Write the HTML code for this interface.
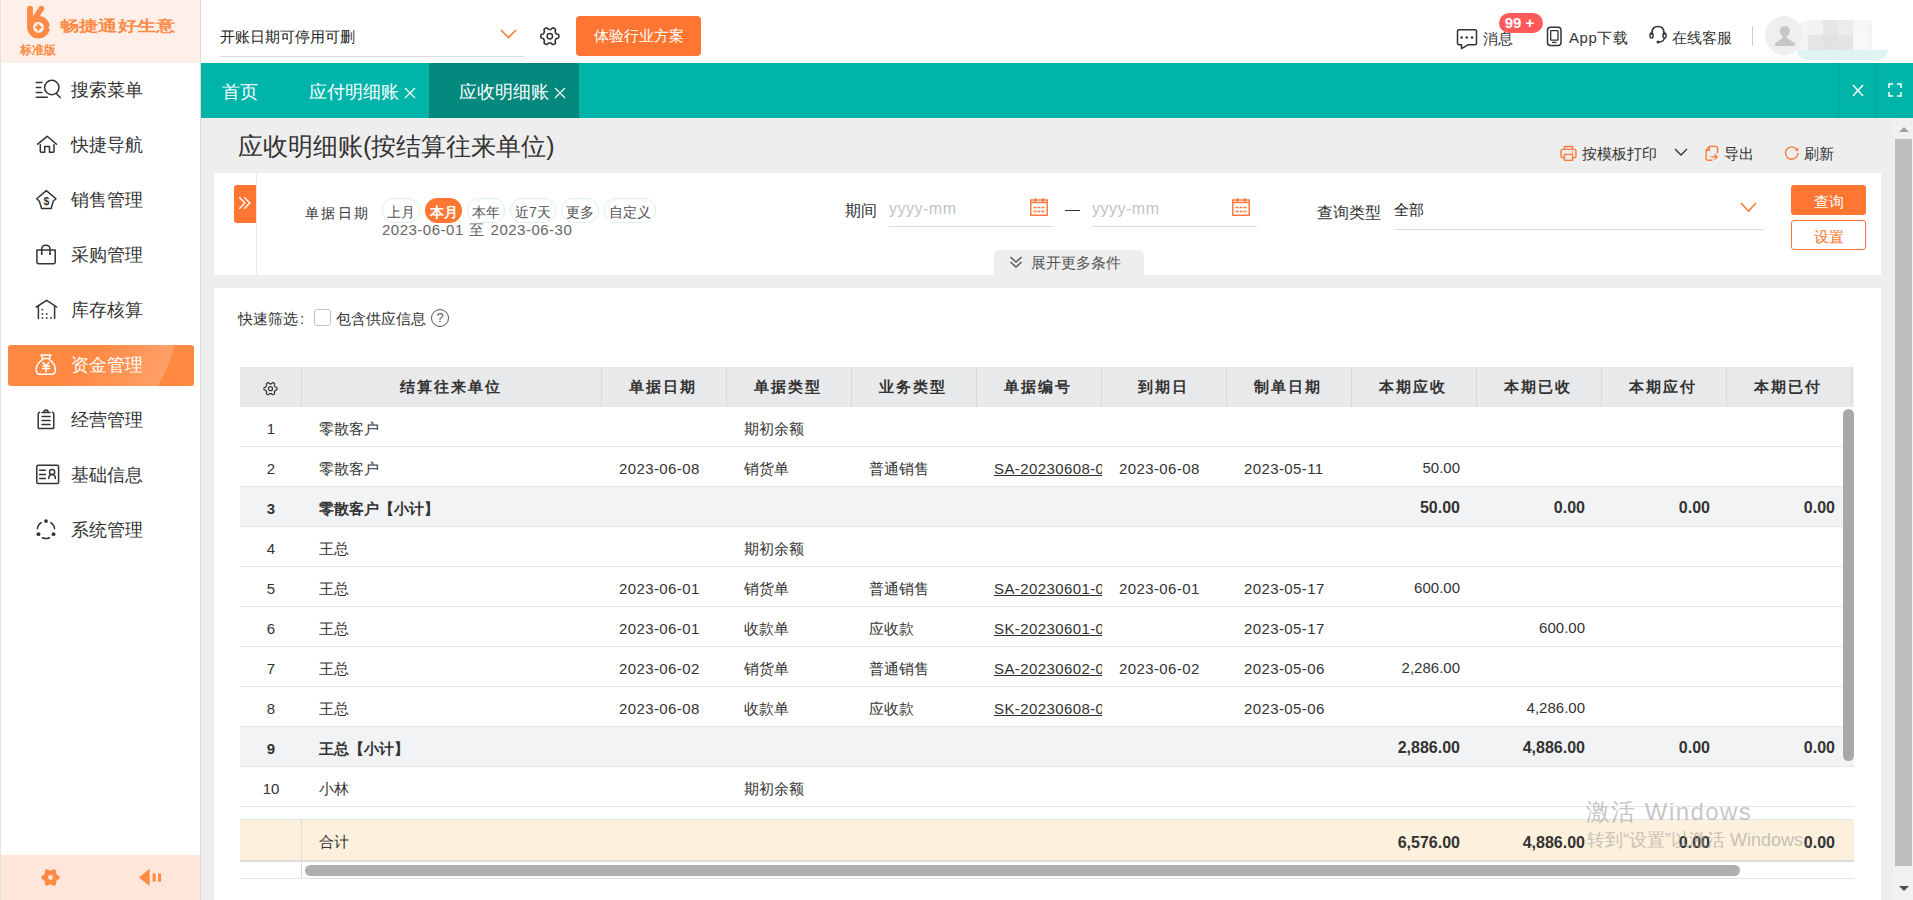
<!DOCTYPE html>
<html><head><meta charset="utf-8">
<style>
*{box-sizing:border-box;margin:0;padding:0}
body{width:1913px;height:900px;overflow:hidden;position:relative;background:#eeeeee;font-family:"Liberation Sans",sans-serif;color:#333}
.abs{position:absolute}
svg{position:absolute;overflow:visible}
#side{left:0;top:0;width:201px;height:900px;background:#fff;border-left:1px solid #e3e3e3;border-right:1px solid #dcdcdc}
#logo{left:1px;top:0;width:199px;height:63px;background:#fef0e9}
.mi{position:absolute;left:71px;font-size:18px;color:#333;line-height:20px;white-space:nowrap}
#act{left:8px;top:345px;width:186px;height:41px;border-radius:3px;background:linear-gradient(105deg,#ff8443 0%,#ff8a48 78%,#ffa36d 87%,#ff8a48 88%,#ff8a48 100%)}
#bot{left:1px;top:855px;width:199px;height:45px;background:#fee7da}
#hdr{left:201px;top:0;width:1712px;height:63px;background:#fff}
#tabs{left:201px;top:63px;width:1712px;height:55px;background:#00b4aa}
.tab{position:absolute;top:0;height:55px;line-height:55px;font-size:18px;color:#fff;white-space:nowrap}
.pill{position:absolute;top:198px;height:25px;padding:0;text-align:center;border:1px solid #dcf1ef;border-radius:12px;font-size:14px;line-height:26px;color:#555;white-space:nowrap}.pill.on{background:#fe7631;border-color:#fe7631;color:#fff;font-weight:bold}
.th{position:absolute;top:367px;height:40px;line-height:40px;padding-right:3px;text-align:center;font-size:15px;font-weight:bold;letter-spacing:2px;color:#333;white-space:nowrap}
.td{position:absolute;height:40px;line-height:40px;padding:0 17px;font-size:15px;color:#333;white-space:nowrap;overflow:hidden}.td.b{font-weight:bold}.td.r.b{font-size:16px}.td.c{text-align:center;padding:0}.td.r{text-align:right}.td.dt,.td.lnk{letter-spacing:0.4px}.lnk{text-overflow:clip}
.t15{font-size:15px;white-space:nowrap}
</style></head><body>
<div id="side" class="abs"></div>
<div id="logo" class="abs"></div>
<!-- logo icon -->
<svg style="left:20px;top:2px" width="36" height="40" viewBox="0 0 36 40"><path d="M10 6.7 V25" stroke="#ff8a45" stroke-width="5.8" stroke-linecap="round"/><path d="M21.4 6.6 L14.5 17" stroke="#ff8a45" stroke-width="5.6" stroke-linecap="round"/><circle cx="18.5" cy="25.3" r="8.4" stroke="#ff8a45" stroke-width="5.8" fill="none"/><path d="M31.5 23.6 L27.6 25.6 L31.5 27.6 Z" fill="#fef0e9"/><path d="M18.5 21.0 Q19.4 24.400000000000002 22.8 25.3 Q19.4 26.2 18.5 29.6 Q17.6 26.2 14.2 25.3 Q17.6 24.400000000000002 18.5 21.0 Z" fill="#ff8a45"/></svg>
<div class="abs" style="left:60px;top:17px;font-size:15px;font-weight:bold;color:#ff8a45;transform:scaleX(1.28);transform-origin:0 0">畅捷通好生意</div>
<div class="abs" style="left:20px;top:42px;font-size:12px;font-weight:bold;color:#ff8a45">标准版</div>

<svg style="left:8px;top:345px" width="186" height="41" viewBox="0 0 186 41"><defs><clipPath id="ac"><rect width="186" height="41" rx="3"/></clipPath><radialGradient id="ag" gradientUnits="userSpaceOnUse" cx="-3" cy="-45" r="176"><stop offset="0.55" stop-color="#fff" stop-opacity="0"/><stop offset="0.995" stop-color="#fff" stop-opacity="0.2"/><stop offset="1" stop-color="#fff" stop-opacity="0"/></radialGradient></defs><g clip-path="url(#ac)"><rect width="186" height="41" fill="#ff8842"/><circle cx="-3" cy="-45" r="176" fill="url(#ag)"/></g></svg>
<div class="mi" style="top:80px">搜索菜单</div>
<div class="mi" style="top:135px">快捷导航</div>
<div class="mi" style="top:190px">销售管理</div>
<div class="mi" style="top:245px">采购管理</div>
<div class="mi" style="top:300px">库存核算</div>
<div class="mi" style="top:355px;color:#fff">资金管理</div>
<div class="mi" style="top:410px">经营管理</div>
<div class="mi" style="top:465px">基础信息</div>
<div class="mi" style="top:520px">系统管理</div>

<div id="bot" class="abs"></div>

<svg style="left:30px;top:75px" width="40" height="30" viewBox="0 0 40 30"><path d="M6.3 7.5 H12 M6.3 12.5 H10.8 M6.3 17.5 H11.8 M6.3 22.2 H17.3 M26.3 18.6 L30.2 22.6" stroke="#333" stroke-width="1.5" fill="none" stroke-linecap="round" stroke-linejoin="round"/><circle cx="21.8" cy="12.5" r="7.2" stroke="#333" stroke-width="1.5" fill="none" stroke-linecap="round" stroke-linejoin="round"/></svg>
<svg style="left:30px;top:130px" width="40" height="30" viewBox="0 0 40 30"><path d="M7.6 14.2 L17.2 6.3 L26.6 14.2 M10.3 14.6 V21.6 Q10.3 22.3 11 22.3 H14.7 V16.4 H19.5 V22.3 H23.3 Q24 22.3 24 21.6 V14.6" stroke="#333" stroke-width="1.5" fill="none" stroke-linecap="round" stroke-linejoin="round"/></svg>
<svg style="left:30px;top:185px" width="40" height="30" viewBox="0 0 40 30"><path d="M16.3 5.6 L6.7 13.8 L9.4 16.2 L11.6 23.6 H21.1 L23.2 16.2 L26 13.8 Z" stroke="#333" stroke-width="1.5" fill="none" stroke-linecap="round" stroke-linejoin="round"/><text x="16.4" y="20.2" font-size="10.5" font-weight="bold" text-anchor="middle" fill="#333" font-family="Liberation Sans">$</text></svg>
<svg style="left:30px;top:240px" width="40" height="30" viewBox="0 0 40 30"><path d="M6.9 9.9 H25.2 V22.3 Q25.2 23.7 23.8 23.7 H8.3 Q6.9 23.7 6.9 22.3 Z M11.7 13.7 V9.2 Q11.7 5.2 15.9 5.2 Q20 5.2 20 9.2 V13.7" stroke="#333" stroke-width="1.5" fill="none" stroke-linecap="round" stroke-linejoin="round"/><circle cx="11.7" cy="14" r="1" fill="#333"/><circle cx="20" cy="14" r="1" fill="#333"/></svg>
<svg style="left:30px;top:295px" width="40" height="30" viewBox="0 0 40 30"><path d="M6.3 12 L16.7 5.3 L26.7 12 M8.4 11.2 V23.4 M24.6 11.2 V23.4" stroke="#333" stroke-width="1.5" fill="none" stroke-linecap="round" stroke-linejoin="round"/><rect x="11.6" y="13.9" width="1.6" height="1.6" fill="#333"/><rect x="11.6" y="18.2" width="1.6" height="1.6" fill="#333"/><rect x="15.9" y="18.2" width="1.6" height="1.6" fill="#333"/><rect x="11.6" y="22.2" width="1.6" height="1.6" fill="#333"/><rect x="15.9" y="22.2" width="1.6" height="1.6" fill="#333"/><rect x="20.2" y="22.2" width="1.6" height="1.6" fill="#333"/></svg>
<svg style="left:30px;top:350px" width="40" height="30" viewBox="0 0 40 30"><path d="M11.2 5 H20.8 L19.4 8.6 H12.6 Z M12.6 9.4 Q6.2 13.8 6.2 19.8 Q6.2 24.3 10 24.3 H21.5 Q25.3 24.3 25.3 19.8 Q25.3 13.8 19.4 9.4 M13 12.6 L16 16 L19 12.6 M16 16 V21.6 M12.6 16 H19.6 M12.6 18.6 H19.6" stroke="#fff" stroke-width="1.5" fill="none" stroke-linecap="round" stroke-linejoin="round"/></svg>
<svg style="left:30px;top:405px" width="40" height="30" viewBox="0 0 40 30"><path d="M9.6 7.2 Q8.2 7.6 8.2 9.2 V22.4 Q8.2 23.5 9.2 23.5 H22.8 Q23.8 23.5 23.8 22.4 V9.2 Q23.8 7.6 22.4 7.2 M12 7.6 H20 M13.9 7.4 Q13.9 5.1 16 5.1 Q18.1 5.1 18.1 7.4 M12 11.6 H20 M12 15.6 H20 M12 19.6 H20" stroke="#333" stroke-width="1.5" fill="none" stroke-linecap="round" stroke-linejoin="round"/></svg>
<svg style="left:30px;top:460px" width="40" height="30" viewBox="0 0 40 30"><rect x="6.8" y="5.2" width="21.8" height="18.3" rx="1.3" stroke="#333" stroke-width="1.5" fill="none" stroke-linecap="round" stroke-linejoin="round"/><path d="M9.6 10.2 H15.4 M9.6 14.4 H15.4 M9.6 18.6 H15.4 M18.8 18.6 Q18.8 14.6 22.1 14.6 Q25.4 14.6 25.4 18.6" stroke="#333" stroke-width="1.5" fill="none" stroke-linecap="round" stroke-linejoin="round"/><circle cx="22.1" cy="12" r="2.6" stroke="#333" stroke-width="1.5" fill="none" stroke-linecap="round" stroke-linejoin="round"/></svg>
<svg style="left:30px;top:515px" width="40" height="30" viewBox="0 0 40 30"><path d="M7.38 13.59 A8.7 8.7 0 0 1 11.14 7.59 M20.86 7.59 A8.7 8.7 0 0 1 24.62 13.59 M19.54 22.75 A8.7 8.7 0 0 1 12.46 22.75" stroke="#333" stroke-width="1.5" fill="none" stroke-linecap="round" stroke-linejoin="round"/><circle cx="16.0" cy="6.1" r="1.9" fill="#333"/><circle cx="8.47" cy="19.15" r="1.9" fill="#333"/><circle cx="23.53" cy="19.15" r="1.9" fill="#333"/></svg>
<!-- bottom bar icons -->
<svg style="left:40px;top:868px" width="21" height="19" viewBox="0 0 21 19"><circle cx="10.5" cy="9.5" r="7.2" fill="#ff8a45"/><circle cx="17.40" cy="9.50" r="2.3" fill="#ff8a45"/><circle cx="13.95" cy="15.48" r="2.3" fill="#ff8a45"/><circle cx="7.05" cy="15.48" r="2.3" fill="#ff8a45"/><circle cx="3.60" cy="9.50" r="2.3" fill="#ff8a45"/><circle cx="7.05" cy="3.52" r="2.3" fill="#ff8a45"/><circle cx="13.95" cy="3.52" r="2.3" fill="#ff8a45"/><circle cx="10.5" cy="9.5" r="2.4" fill="#fee7da"/></svg>
<svg style="left:138px;top:868px" width="24" height="19" viewBox="0 0 24 19"><path d="M0.9 9.4 L11.6 0.8 V18.1 Z" fill="#ff8a45"/><rect x="14.6" y="5.5" width="3.1" height="8.2" fill="#ff8a45"/><rect x="20" y="5.5" width="3.1" height="8.2" fill="#ff8a45"/></svg>
<div id="hdr" class="abs"></div>
<div id="tabs" class="abs"></div>
<div class="abs" style="left:429px;top:63px;width:150px;height:55px;background:#03887e"></div>
<div class="tab" style="left:222px;top:64.5px">首页</div>
<div class="tab" style="left:309px;top:64.5px">应付明细账</div>
<div class="tab" style="left:459px;top:64.5px">应收明细账</div>

<!-- header -->
<div class="abs t15" style="left:220px;top:27.5px;color:#222">开账日期可停用可删</div>
<div class="abs" style="left:220px;top:56px;width:304px;height:1px;background:#dcdcdc"></div>
<svg style="left:500px;top:29px" width="17" height="10"><path d="M1 1 L8.5 8.5 L16 1" stroke="#ff7a3d" stroke-width="1.6" fill="none"/></svg>
<svg style="left:535px;top:22px" width="30" height="28" viewBox="0 0 30 28"><path d="M23.85 14.20 L23.83 14.67 L23.76 15.14 L23.60 15.59 L23.21 15.99 L22.43 16.24 L21.65 16.43 L21.23 16.67 L21.00 16.96 L20.82 17.27 L20.65 17.57 L20.47 17.88 L20.29 18.19 L20.15 18.53 L20.15 19.02 L20.39 19.79 L20.55 20.59 L20.41 21.13 L20.10 21.49 L19.73 21.78 L19.33 22.04 L18.91 22.26 L18.47 22.43 L17.99 22.52 L17.46 22.38 L16.84 21.83 L16.30 21.25 L15.88 21.00 L15.51 20.95 L15.15 20.95 L14.80 20.95 L14.45 20.95 L14.09 20.95 L13.72 21.00 L13.30 21.25 L12.76 21.83 L12.14 22.38 L11.61 22.52 L11.13 22.43 L10.69 22.26 L10.28 22.04 L9.87 21.78 L9.50 21.49 L9.19 21.13 L9.05 20.59 L9.21 19.79 L9.45 19.02 L9.45 18.53 L9.31 18.19 L9.13 17.88 L8.95 17.57 L8.78 17.27 L8.60 16.96 L8.37 16.67 L7.95 16.43 L7.17 16.24 L6.39 15.99 L6.00 15.59 L5.84 15.14 L5.77 14.67 L5.75 14.20 L5.77 13.73 L5.84 13.26 L6.00 12.81 L6.39 12.41 L7.17 12.16 L7.95 11.97 L8.37 11.73 L8.60 11.44 L8.78 11.13 L8.95 10.83 L9.13 10.52 L9.31 10.21 L9.45 9.87 L9.45 9.38 L9.21 8.61 L9.05 7.81 L9.19 7.27 L9.50 6.91 L9.87 6.62 L10.27 6.36 L10.69 6.14 L11.13 5.97 L11.61 5.88 L12.14 6.02 L12.76 6.57 L13.30 7.15 L13.72 7.40 L14.09 7.45 L14.45 7.45 L14.80 7.45 L15.15 7.45 L15.51 7.45 L15.88 7.40 L16.30 7.15 L16.84 6.57 L17.46 6.02 L17.99 5.88 L18.47 5.97 L18.91 6.14 L19.33 6.36 L19.73 6.62 L20.10 6.91 L20.41 7.27 L20.55 7.81 L20.39 8.61 L20.15 9.38 L20.15 9.87 L20.29 10.21 L20.47 10.52 L20.65 10.83 L20.82 11.13 L21.00 11.44 L21.23 11.73 L21.65 11.97 L22.43 12.16 L23.21 12.41 L23.60 12.81 L23.76 13.26 L23.83 13.73 Z" stroke="#333" stroke-width="1.6" fill="none" stroke-linejoin="round"/><circle cx="14.8" cy="14.2" r="2.7" stroke="#333" stroke-width="1.5" fill="none"/></svg>
<div class="abs" style="left:576px;top:16px;width:125px;height:40px;border-radius:4px;background:#fe7631;color:#fff;font-size:15px;line-height:40px;text-align:center">体验行业方案</div>

<svg style="left:1450px;top:20px" width="30" height="32" viewBox="0 0 30 32"><path d="M18 24.8 H25 Q26.5 24.8 26.5 23.3 V11.3 Q26.5 9.8 25 9.8 H9 Q7.5 9.8 7.5 11.3 V23.3 Q7.5 24.8 9 24.8 H11.5 V28.6 Z" stroke="#333" stroke-width="1.5" fill="none" stroke-linejoin="round"/><circle cx="11.6" cy="17.4" r="1.25" fill="#333"/><circle cx="16.8" cy="17.4" r="1.25" fill="#333"/><circle cx="22" cy="17.4" r="1.25" fill="#333"/></svg>
<div class="abs t15" style="left:1483px;top:30px;color:#333">消息</div>
<div class="abs" style="left:1499px;top:13px;width:44px;height:20px;border-radius:10px;background:#fe5a5a;color:#fff;font-size:15px;font-weight:bold;line-height:20px;text-align:center;white-space:nowrap;padding-right:3px">99 +</div>
<svg style="left:1540px;top:20px" width="30" height="32" viewBox="0 0 30 32"><rect x="7.5" y="7.2" width="13.5" height="18.2" rx="3" stroke="#333" stroke-width="1.5" fill="none"/><rect x="10.7" y="10.6" width="7.3" height="9.6" rx="0.5" stroke="#333" stroke-width="1.3" fill="none"/><path d="M12.6 22.4 H15.9" stroke="#333" stroke-width="1.4" stroke-linecap="round"/></svg>
<div class="abs t15" style="left:1569px;top:29px;color:#333;letter-spacing:0.6px">App下载</div>
<svg style="left:1649px;top:25px" width="18" height="19" viewBox="0 0 18 19"><path d="M3 10 V8 Q3 1.5 9 1.5 Q15 1.5 15 8 V10" stroke="#333" stroke-width="1.6" fill="none"/><rect x="1" y="8" width="3" height="5" rx="1.5" stroke="#333" stroke-width="1.5" fill="none"/><rect x="14" y="8" width="3" height="5" rx="1.5" stroke="#333" stroke-width="1.5" fill="none"/><path d="M15.5 13 Q15 16.5 10 17" stroke="#333" stroke-width="1.5" fill="none"/><circle cx="9" cy="17" r="1.5" fill="#333"/></svg>
<div class="abs t15" style="left:1672px;top:28.5px;color:#333">在线客服</div>
<div class="abs" style="left:1752px;top:26px;width:1px;height:20px;background:#ccc"></div>
<div class="abs" style="left:1797px;top:50px;width:91px;height:10px;border-radius:0 0 14px 14px;background:#dff3f2"></div>
<div class="abs" style="left:1796px;top:20px;width:76px;height:30px;background:#f4f4f4;border-radius:12px 0 0 0"></div>
<div class="abs" style="left:1808px;top:20px;width:15px;height:15px;background:#f2f2f2"></div>
<div class="abs" style="left:1823px;top:20px;width:15px;height:15px;background:#e6e6e6"></div>
<div class="abs" style="left:1838px;top:20px;width:15px;height:15px;background:#ececee"></div>
<div class="abs" style="left:1853px;top:20px;width:15px;height:15px;background:#f7f7f8"></div>
<div class="abs" style="left:1808px;top:35px;width:15px;height:15px;background:#e5e5e5"></div>
<div class="abs" style="left:1823px;top:35px;width:15px;height:15px;background:#e2e2e2"></div>
<div class="abs" style="left:1838px;top:35px;width:15px;height:15px;background:#e4e4e4"></div>
<div class="abs" style="left:1853px;top:35px;width:15px;height:15px;background:#f8f8f9"></div>
<div class="abs" style="left:1765px;top:16px;width:38px;height:39px;border-radius:50%;background:#efefef"></div>
<svg style="left:1760px;top:10px" width="40" height="45" viewBox="0 0 40 45"><circle cx="24.9" cy="21.2" r="5.1" fill="#c6c6c6"/><path d="M22.6 25 H27.2 V28.3 L35 33.3 V35.9 H15 V33.3 L22.6 28.3 Z" fill="#c6c6c6"/></svg>

<!-- tab close icons -->
<svg style="left:404px;top:87px" width="12" height="12"><path d="M1 1 L11 11 M11 1 L1 11" stroke="#fff" stroke-width="1.2"/></svg>
<svg style="left:554px;top:87px" width="12" height="12"><path d="M1 1 L11 11 M11 1 L1 11" stroke="#fff" stroke-width="1.2"/></svg>
<div class="abs" style="left:1836px;top:63px;width:4px;height:55px;background:linear-gradient(90deg,rgba(0,0,0,0),rgba(0,0,0,0.05))"></div>
<div class="abs" style="left:1874px;top:63px;width:4px;height:55px;background:linear-gradient(90deg,rgba(0,0,0,0),rgba(0,0,0,0.05))"></div>
<svg style="left:1852px;top:84px" width="12" height="13"><path d="M1 1 L11 12 M11 1 L1 12" stroke="#fff" stroke-width="1.4"/></svg>
<svg style="left:1888px;top:83px" width="14" height="14"><path d="M1 5 V1 H5 M9 1 H13 V5 M13 9 V13 H9 M5 13 H1 V9" stroke="#fff" stroke-width="1.5" fill="none"/></svg>

<!-- content -->
<div class="abs" style="left:238px;top:130px;font-size:25px;color:#333;white-space:nowrap">应收明细账(按结算往来单位)</div>
<svg style="left:1555px;top:140px" width="30" height="25" viewBox="0 0 30 25"><path d="M9.4 9.3 V6.5 H17.5 V9.3" stroke="#ff7a3d" stroke-width="1.4" fill="none"/><path d="M9.2 17.8 H8 Q6 17.8 6 15.8 V11.4 Q6 9.4 8 9.4 H19 Q21 9.4 21 11.4 V15.8 Q21 17.8 19 17.8 H17.8" stroke="#ff7a3d" stroke-width="1.4" fill="none"/><rect x="9.4" y="14.4" width="8.1" height="5.9" stroke="#ff7a3d" stroke-width="1.4" fill="none"/><circle cx="17.6" cy="12.1" r="0.8" fill="#ff7a3d"/></svg>
<div class="abs t15" style="left:1582px;top:144.5px">按模板打印</div>
<svg style="left:1674px;top:148px" width="14" height="9"><path d="M1 1 L7 7 L13 1" stroke="#333" stroke-width="1.4" fill="none"/></svg>
<svg style="left:1700px;top:140px" width="30" height="25" viewBox="0 0 30 25"><path d="M9.4 6.4 H15.6 Q17.5 6.4 17.5 8.3 V13.6 M12.5 20.3 H8 Q6.1 20.3 6.1 18.4 V10.3 L9.4 6.4 V10.3 H6.1" stroke="#ff7a3d" stroke-width="1.4" fill="none" stroke-linejoin="round"/><path d="M10.8 16.9 H17 M14.5 14.3 L17.1 16.9 L14.5 19.5" stroke="#ff7a3d" stroke-width="1.4" fill="none"/></svg>
<div class="abs t15" style="left:1724px;top:144.5px">导出</div>
<svg style="left:1778px;top:140px" width="30" height="25" viewBox="0 0 30 25"><path d="M19.85 13 A6.2 6.2 0 1 1 18.5 9.2" stroke="#ff7a3d" stroke-width="1.4" fill="none"/><path d="M16.6 10.6 L20.2 11.3 L20.2 7.6 Z" fill="#ff7a3d"/></svg>
<div class="abs t15" style="left:1804px;top:144.5px">刷新</div>

<div class="abs" style="left:214px;top:173px;width:1667px;height:102px;background:#fff"></div>
<div class="abs" style="left:256px;top:173px;width:1px;height:102px;background:#e8e8e8"></div>
<div class="abs" style="left:234px;top:185px;width:22px;height:38px;background:#fe7631;border-radius:3px 0 0 3px"></div>
<svg style="left:238px;top:196px" width="15" height="15"><path d="M1.3 1.3 L6.8 7 L1.3 12.8 M6.3 1.3 L11.8 7 L6.3 12.8" stroke="#fff" stroke-width="1.4" fill="none"/></svg>
<div class="abs" style="left:305px;top:204.5px;font-size:14px;letter-spacing:2.3px;white-space:nowrap">单据日期</div>
<div class="pill" style="left:382px;width:38px">上月</div>
<div class="pill on" style="left:425px;width:37px">本月</div>
<div class="pill" style="left:467px;width:38px">本年</div>
<div class="pill" style="left:510px;width:46px">近7天</div>
<div class="pill" style="left:561px;width:38px">更多</div>
<div class="pill" style="left:604px;width:52px">自定义</div>
<div class="abs" style="left:382px;top:221px;font-size:15px;color:#666;white-space:nowrap;letter-spacing:0.5px;word-spacing:1px">2023-06-01 至 2023-06-30</div>

<div class="abs" style="left:845px;top:201px;font-size:16px;white-space:nowrap">期间</div>
<div class="abs" style="left:889px;top:199.5px;font-size:16px;letter-spacing:0.5px;color:#c0c4cc;white-space:nowrap">yyyy-mm</div>
<div class="abs" style="left:889px;top:226px;width:165px;height:1px;background:#dcdcdc"></div>
<svg class="cal" style="left:1030px;top:198px" width="18" height="18" viewBox="0 0 18 18"><path d="M0.8 2 H17.2 V17.2 H0.8 Z M0.8 4.6 H17.2" stroke="#ff7a3d" stroke-width="1.5" fill="none"/><path d="M5.5 0 V5 M13 0 V5" stroke="#ff7a3d" stroke-width="1.5"/><path d="M3.5 9.6 H14.5 M3.5 13.4 H14.5" stroke="#ff7a3d" stroke-width="1.5" stroke-dasharray="3 1"/></svg>
<div class="abs" style="left:1065px;top:210px;width:15px;height:1px;background:#333"></div>
<div class="abs" style="left:1092px;top:199.5px;font-size:16px;letter-spacing:0.5px;color:#c0c4cc;white-space:nowrap">yyyy-mm</div>
<div class="abs" style="left:1092px;top:226px;width:165px;height:1px;background:#dcdcdc"></div>
<svg style="left:1232px;top:198px" width="18" height="18" viewBox="0 0 18 18"><path d="M0.8 2 H17.2 V17.2 H0.8 Z M0.8 4.6 H17.2" stroke="#ff7a3d" stroke-width="1.5" fill="none"/><path d="M5.5 0 V5 M13 0 V5" stroke="#ff7a3d" stroke-width="1.5"/><path d="M3.5 9.6 H14.5 M3.5 13.4 H14.5" stroke="#ff7a3d" stroke-width="1.5" stroke-dasharray="3 1"/></svg>
<div class="abs" style="left:994px;top:250px;width:150px;height:25px;background:#eeeeee;border-radius:6px 6px 0 0"></div>
<svg style="left:1009px;top:255px" width="14" height="14"><path d="M1.5 2 L7 7 L12.5 2 M1.5 7 L7 12 L12.5 7" stroke="#555" stroke-width="1.4" fill="none"/></svg>
<div class="abs" style="left:1031px;top:254px;font-size:15px;color:#555;white-space:nowrap">展开更多条件</div>

<div class="abs" style="left:1317px;top:203px;font-size:16px;white-space:nowrap">查询类型</div>
<div class="abs" style="left:1394px;top:201px;font-size:15px;color:#222;white-space:nowrap">全部</div>
<div class="abs" style="left:1394px;top:229px;width:369px;height:1px;background:#dcdcdc"></div>
<svg style="left:1740px;top:202px" width="17" height="11"><path d="M1 1 L8.5 9 L16 1" stroke="#ff7a3d" stroke-width="1.6" fill="none"/></svg>
<div class="abs" style="left:1791px;top:185px;width:75px;height:30px;background:#fe7631;border-radius:3px;color:#fff;font-size:15px;line-height:33px;text-align:center">查询</div>
<div class="abs" style="left:1791px;top:220px;width:75px;height:30px;border:1px solid #fe7631;border-radius:3px;color:#fe7631;font-size:15px;line-height:31px;text-align:center">设置</div>

<div class="abs" style="left:214px;top:288px;width:1667px;height:612px;background:#fff"></div>
<div class="abs" style="left:238px;top:310px;font-size:15px;white-space:nowrap">快速筛选<span style="margin-left:2px">:</span></div>
<div class="abs" style="left:314px;top:309px;width:17px;height:17px;border:1px solid #c4c4c4;border-radius:3px;background:#fff"></div>
<div class="abs" style="left:336px;top:310px;font-size:15px;white-space:nowrap">包含供应信息</div>
<div class="abs" style="left:431px;top:309px;width:18px;height:18px;border:1.5px solid #555;border-radius:50%;font-size:13px;line-height:15px;text-align:center;color:#555">?</div>

<!-- scrollbar -->
<div class="abs" style="left:1893px;top:118px;width:20px;height:782px;background:#f1f1f1"></div>
<div class="abs" style="left:1895px;top:139px;width:17px;height:727px;background:#bebebe"></div>
<svg style="left:1898px;top:126px" width="12" height="7"><path d="M1 6 L6 1 L11 6Z" fill="#a3a3a3"/></svg>
<svg style="left:1898px;top:885px" width="12" height="7"><path d="M1 1 L6 6 L11 1Z" fill="#505050"/></svg>
<!--TABLE-->
<div class="abs" style="left:240px;top:367px;width:1614px;height:40px;background:#e8e9eb"></div>
<div class="abs" style="left:301px;top:367px;width:1px;height:40px;background:#d8d9db"></div>
<div class="abs" style="left:601px;top:367px;width:1px;height:40px;background:#d8d9db"></div>
<div class="abs" style="left:726px;top:367px;width:1px;height:40px;background:#d8d9db"></div>
<div class="abs" style="left:851px;top:367px;width:1px;height:40px;background:#d8d9db"></div>
<div class="abs" style="left:976px;top:367px;width:1px;height:40px;background:#d8d9db"></div>
<div class="abs" style="left:1101px;top:367px;width:1px;height:40px;background:#d8d9db"></div>
<div class="abs" style="left:1226px;top:367px;width:1px;height:40px;background:#d8d9db"></div>
<div class="abs" style="left:1351px;top:367px;width:1px;height:40px;background:#d8d9db"></div>
<div class="abs" style="left:1476px;top:367px;width:1px;height:40px;background:#d8d9db"></div>
<div class="abs" style="left:1601px;top:367px;width:1px;height:40px;background:#d8d9db"></div>
<div class="abs" style="left:1726px;top:367px;width:1px;height:40px;background:#d8d9db"></div>
<div class="abs" style="left:1851px;top:367px;width:1px;height:40px;background:#d8d9db"></div>
<div class="th" style="left:302px;width:300px">结算往来单位</div>
<div class="th" style="left:602px;width:125px">单据日期</div>
<div class="th" style="left:727px;width:125px">单据类型</div>
<div class="th" style="left:852px;width:125px">业务类型</div>
<div class="th" style="left:977px;width:125px">单据编号</div>
<div class="th" style="left:1102px;width:125px">到期日</div>
<div class="th" style="left:1227px;width:125px">制单日期</div>
<div class="th" style="left:1352px;width:125px">本期应收</div>
<div class="th" style="left:1477px;width:125px">本期已收</div>
<div class="th" style="left:1602px;width:125px">本期应付</div>
<div class="th" style="left:1727px;width:125px">本期已付</div>
<svg style="left:260px;top:378px" width="22" height="22" viewBox="0 0 22 22"><path d="M17.05 10.70 L17.04 11.04 L16.99 11.38 L16.87 11.71 L16.58 11.99 L16.01 12.18 L15.43 12.30 L15.12 12.47 L14.96 12.68 L14.83 12.90 L14.70 13.12 L14.57 13.34 L14.45 13.57 L14.35 13.82 L14.35 14.17 L14.53 14.73 L14.66 15.32 L14.56 15.71 L14.33 15.98 L14.06 16.19 L13.78 16.37 L13.47 16.53 L13.15 16.66 L12.81 16.72 L12.42 16.61 L11.98 16.21 L11.58 15.77 L11.27 15.59 L11.01 15.55 L10.75 15.55 L10.50 15.55 L10.25 15.55 L9.99 15.55 L9.73 15.59 L9.42 15.77 L9.02 16.21 L8.58 16.61 L8.19 16.72 L7.85 16.66 L7.53 16.53 L7.23 16.37 L6.94 16.19 L6.67 15.98 L6.44 15.71 L6.34 15.32 L6.47 14.73 L6.65 14.17 L6.65 13.82 L6.55 13.57 L6.43 13.34 L6.30 13.12 L6.17 12.90 L6.04 12.68 L5.88 12.47 L5.57 12.30 L4.99 12.18 L4.42 11.99 L4.13 11.71 L4.01 11.38 L3.96 11.04 L3.95 10.70 L3.96 10.36 L4.01 10.02 L4.13 9.69 L4.42 9.41 L4.99 9.22 L5.57 9.10 L5.88 8.93 L6.04 8.72 L6.17 8.50 L6.30 8.28 L6.43 8.06 L6.55 7.83 L6.65 7.58 L6.65 7.23 L6.47 6.67 L6.34 6.08 L6.44 5.69 L6.67 5.42 L6.94 5.21 L7.22 5.03 L7.53 4.87 L7.85 4.74 L8.19 4.68 L8.58 4.79 L9.02 5.19 L9.42 5.63 L9.73 5.81 L9.99 5.85 L10.25 5.85 L10.50 5.85 L10.75 5.85 L11.01 5.85 L11.27 5.81 L11.58 5.63 L11.98 5.19 L12.42 4.79 L12.81 4.68 L13.15 4.74 L13.47 4.87 L13.78 5.03 L14.06 5.21 L14.33 5.42 L14.56 5.69 L14.66 6.08 L14.53 6.67 L14.35 7.23 L14.35 7.58 L14.45 7.83 L14.57 8.06 L14.70 8.28 L14.83 8.50 L14.96 8.72 L15.12 8.93 L15.43 9.10 L16.01 9.22 L16.58 9.41 L16.87 9.69 L16.99 10.02 L17.04 10.36 Z" stroke="#333" stroke-width="1.2" fill="none" stroke-linejoin="round"/><circle cx="10.5" cy="10.7" r="2" stroke="#333" stroke-width="1.2" fill="none"/></svg>
<div class="abs" style="left:240px;top:446px;width:1614px;height:1px;background:#e4e5e7"></div>
<div class="td c" style="left:240px;top:408.5px;width:62px">1</div>
<div class="td" style="left:302px;top:409px;width:300px">零散客户</div>
<div class="td" style="left:727px;top:409px;width:125px">期初余额</div>
<div class="abs" style="left:240px;top:486px;width:1614px;height:1px;background:#e4e5e7"></div>
<div class="td c" style="left:240px;top:448.5px;width:62px">2</div>
<div class="td" style="left:302px;top:449px;width:300px">零散客户</div>
<div class="td dt" style="left:602px;top:448.5px;width:125px">2023-06-08</div>
<div class="td" style="left:727px;top:449px;width:125px">销货单</div>
<div class="td" style="left:852px;top:449px;width:125px">普通销售</div>
<div class="td lnk" style="left:977px;top:448.5px;width:125px"><u>SA-20230608-0</u></div>
<div class="td dt" style="left:1102px;top:448.5px;width:125px">2023-06-08</div>
<div class="td dt" style="left:1227px;top:448.5px;width:125px">2023-05-11</div>
<div class="td r" style="left:1352px;top:447.5px;width:125px">50.00</div>
<div class="abs" style="left:240px;top:487px;width:1614px;height:39px;background:#f2f3f5"></div>
<div class="abs" style="left:240px;top:526px;width:1614px;height:1px;background:#e4e5e7"></div>
<div class="td c b" style="left:240px;top:488.5px;width:62px">3</div>
<div class="td b" style="left:302px;top:489px;width:300px">零散客户【小计】</div>
<div class="td r b" style="left:1352px;top:487.5px;width:125px">50.00</div>
<div class="td r b" style="left:1477px;top:487.5px;width:125px">0.00</div>
<div class="td r b" style="left:1602px;top:487.5px;width:125px">0.00</div>
<div class="td r b" style="left:1727px;top:487.5px;width:125px">0.00</div>
<div class="abs" style="left:240px;top:566px;width:1614px;height:1px;background:#e4e5e7"></div>
<div class="td c" style="left:240px;top:528.5px;width:62px">4</div>
<div class="td" style="left:302px;top:529px;width:300px">王总</div>
<div class="td" style="left:727px;top:529px;width:125px">期初余额</div>
<div class="abs" style="left:240px;top:606px;width:1614px;height:1px;background:#e4e5e7"></div>
<div class="td c" style="left:240px;top:568.5px;width:62px">5</div>
<div class="td" style="left:302px;top:569px;width:300px">王总</div>
<div class="td dt" style="left:602px;top:568.5px;width:125px">2023-06-01</div>
<div class="td" style="left:727px;top:569px;width:125px">销货单</div>
<div class="td" style="left:852px;top:569px;width:125px">普通销售</div>
<div class="td lnk" style="left:977px;top:568.5px;width:125px"><u>SA-20230601-0</u></div>
<div class="td dt" style="left:1102px;top:568.5px;width:125px">2023-06-01</div>
<div class="td dt" style="left:1227px;top:568.5px;width:125px">2023-05-17</div>
<div class="td r" style="left:1352px;top:567.5px;width:125px">600.00</div>
<div class="abs" style="left:240px;top:646px;width:1614px;height:1px;background:#e4e5e7"></div>
<div class="td c" style="left:240px;top:608.5px;width:62px">6</div>
<div class="td" style="left:302px;top:609px;width:300px">王总</div>
<div class="td dt" style="left:602px;top:608.5px;width:125px">2023-06-01</div>
<div class="td" style="left:727px;top:609px;width:125px">收款单</div>
<div class="td" style="left:852px;top:609px;width:125px">应收款</div>
<div class="td lnk" style="left:977px;top:608.5px;width:125px"><u>SK-20230601-0</u></div>
<div class="td dt" style="left:1227px;top:608.5px;width:125px">2023-05-17</div>
<div class="td r" style="left:1477px;top:607.5px;width:125px">600.00</div>
<div class="abs" style="left:240px;top:686px;width:1614px;height:1px;background:#e4e5e7"></div>
<div class="td c" style="left:240px;top:648.5px;width:62px">7</div>
<div class="td" style="left:302px;top:649px;width:300px">王总</div>
<div class="td dt" style="left:602px;top:648.5px;width:125px">2023-06-02</div>
<div class="td" style="left:727px;top:649px;width:125px">销货单</div>
<div class="td" style="left:852px;top:649px;width:125px">普通销售</div>
<div class="td lnk" style="left:977px;top:648.5px;width:125px"><u>SA-20230602-0</u></div>
<div class="td dt" style="left:1102px;top:648.5px;width:125px">2023-06-02</div>
<div class="td dt" style="left:1227px;top:648.5px;width:125px">2023-05-06</div>
<div class="td r" style="left:1352px;top:647.5px;width:125px">2,286.00</div>
<div class="abs" style="left:240px;top:726px;width:1614px;height:1px;background:#e4e5e7"></div>
<div class="td c" style="left:240px;top:688.5px;width:62px">8</div>
<div class="td" style="left:302px;top:689px;width:300px">王总</div>
<div class="td dt" style="left:602px;top:688.5px;width:125px">2023-06-08</div>
<div class="td" style="left:727px;top:689px;width:125px">收款单</div>
<div class="td" style="left:852px;top:689px;width:125px">应收款</div>
<div class="td lnk" style="left:977px;top:688.5px;width:125px"><u>SK-20230608-0</u></div>
<div class="td dt" style="left:1227px;top:688.5px;width:125px">2023-05-06</div>
<div class="td r" style="left:1477px;top:687.5px;width:125px">4,286.00</div>
<div class="abs" style="left:240px;top:727px;width:1614px;height:39px;background:#f2f3f5"></div>
<div class="abs" style="left:240px;top:766px;width:1614px;height:1px;background:#e4e5e7"></div>
<div class="td c b" style="left:240px;top:728.5px;width:62px">9</div>
<div class="td b" style="left:302px;top:729px;width:300px">王总【小计】</div>
<div class="td r b" style="left:1352px;top:727.5px;width:125px">2,886.00</div>
<div class="td r b" style="left:1477px;top:727.5px;width:125px">4,886.00</div>
<div class="td r b" style="left:1602px;top:727.5px;width:125px">0.00</div>
<div class="td r b" style="left:1727px;top:727.5px;width:125px">0.00</div>
<div class="abs" style="left:240px;top:806px;width:1614px;height:1px;background:#e4e5e7"></div>
<div class="td c" style="left:240px;top:768.5px;width:62px">10</div>
<div class="td" style="left:302px;top:769px;width:300px">小林</div>
<div class="td" style="left:727px;top:769px;width:125px">期初余额</div>
<div class="abs" style="left:240px;top:819px;width:1614px;height:1px;background:#e4e5e7"></div>
<div class="abs" style="left:240px;top:820px;width:1614px;height:40px;background:#fdf0dc"></div>
<div class="abs" style="left:240px;top:860px;width:1614px;height:2px;background:#dddddd"></div>
<div class="abs" style="left:240px;top:878px;width:1614px;height:1px;background:#e4e5e7"></div>
<div class="abs" style="left:301px;top:820px;width:1px;height:58px;background:#dcdcdc"></div>
<div class="abs" style="left:305px;top:865px;width:1435px;height:11px;border-radius:6px;background:#afafaf"></div>
<div class="td" style="left:302px;top:822px;width:300px">合计</div>
<div class="td b r" style="left:1352px;top:822.5px;width:125px">6,576.00</div>
<div class="td b r" style="left:1477px;top:822.5px;width:125px">4,886.00</div>
<div class="td b r" style="left:1602px;top:822.5px;width:125px">0.00</div>
<div class="td b r" style="left:1727px;top:822.5px;width:125px">0.00</div>
<div class="abs" style="left:1843px;top:409px;width:11px;height:352px;border-radius:6px;background:#a8a8a8"></div>
<div class="abs" style="left:1586px;top:796px;font-size:24px;letter-spacing:1.4px;color:rgba(150,150,150,0.55);white-space:nowrap">激活 Windows</div>
<div class="abs" style="left:1587px;top:828px;font-size:18px;color:rgba(150,150,150,0.55);white-space:nowrap">转到“设置”以激活 Windows。</div>
</body></html>
